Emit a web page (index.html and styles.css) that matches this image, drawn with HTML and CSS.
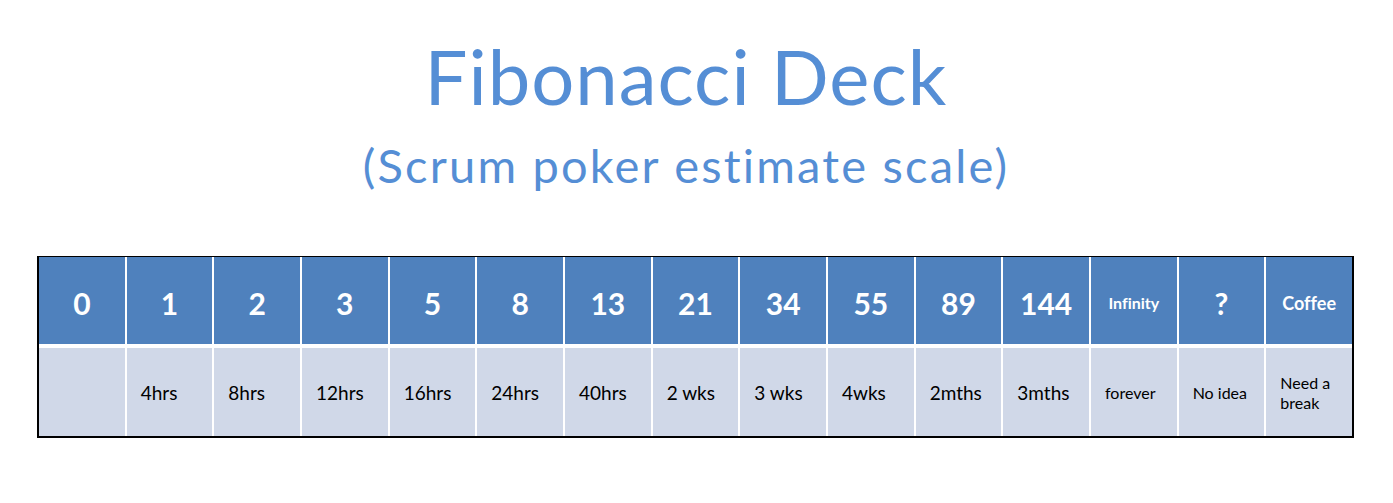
FILE: index.html
```html
<!DOCTYPE html>
<html lang="en">
<head>
<meta charset="utf-8">
<title>Fibonacci Deck</title>
<link rel="stylesheet" href="styles.css">
</head>
<body>
<main class="slide">
  <header class="heading">
    <h1 class="title">Fibonacci Deck</h1>
    <p class="subtitle">(Scrum poker estimate scale)</p>
  </header>
  <section class="deck">
    <div class="card">0</div>
    <div class="card">1</div>
    <div class="card">2</div>
    <div class="card">3</div>
    <div class="card">5</div>
    <div class="card">8</div>
    <div class="card">13</div>
    <div class="card">21</div>
    <div class="card">34</div>
    <div class="card">55</div>
    <div class="card">89</div>
    <div class="card">144</div>
    <div class="card card-small">Infinity</div>
    <div class="card">?</div>
    <div class="card card-word">Coffee</div>

    <div class="est"></div>
    <div class="est">4hrs</div>
    <div class="est">8hrs</div>
    <div class="est">12hrs</div>
    <div class="est">16hrs</div>
    <div class="est">24hrs</div>
    <div class="est">40hrs</div>
    <div class="est">2 wks</div>
    <div class="est">3 wks</div>
    <div class="est">4wks</div>
    <div class="est">2mths</div>
    <div class="est">3mths</div>
    <div class="est est-small">forever</div>
    <div class="est est-small">No idea</div>
    <div class="est est-small">Need a break</div>
  </section>
</main>
</body>
</html>
```

FILE: styles.css
```css
html, body {
  margin: 0;
  padding: 0;
  background: #ffffff;
}

body {
  font-family: "Lato", "Open Sans", sans-serif;
  font-variant-ligatures: none;
}

.slide {
  width: 1393px;
  height: 503px;
  display: flex;
  flex-direction: column;
}

.heading {
  display: flex;
  flex-direction: column;
  align-items: center;
  padding-top: 38px;
  padding-right: 21px;
}

.title {
  margin: 0;
  font-weight: 400;
  font-size: 76px;
  line-height: 1;
  letter-spacing: 1px;
  color: #558ed5;
}

.subtitle {
  margin: 28px 0 0 0;
  font-size: 47px;
  line-height: 1;
  letter-spacing: 2.2px;
  color: #558ed5;
}

.deck {
  margin: 67px 0 0 37px;
  width: 1317px;
  box-sizing: border-box;
  border: 2px solid #000;
  border-top-width: 1px;
  background: #ffffff;
  display: grid;
  grid-template-columns: repeat(15, 1fr);
  grid-template-rows: 87px 88px;
  column-gap: 2px;
  row-gap: 4px;
}

.card {
  background: #4f81bd;
  color: #ffffff;
  font-weight: 700;
  font-size: 30px;
  display: flex;
  align-items: center;
  justify-content: center;
  padding-top: 4px;
}

.card-small {
  font-size: 16px;
}

.card-word {
  font-size: 18px;
}

.est {
  background: #d0d8e8;
  color: #000000;
  font-size: 19px;
  display: flex;
  align-items: center;
  padding: 2px 8px 0 14px;
  line-height: 20px;
}

.est-small {
  font-size: 16px;
}
```
